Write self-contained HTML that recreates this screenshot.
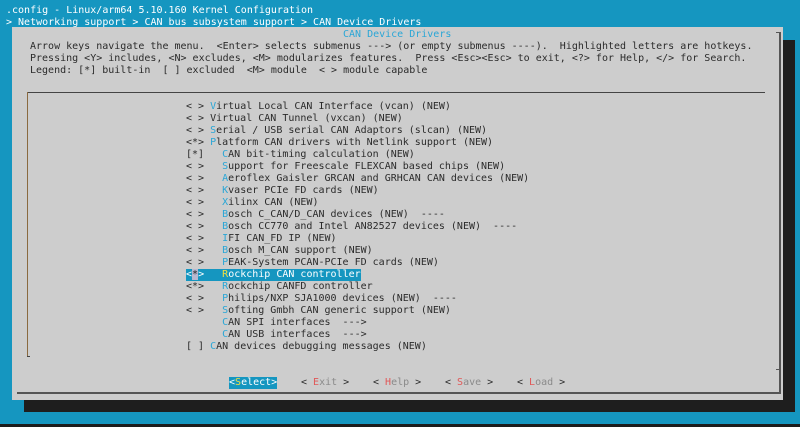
<!DOCTYPE html>
<html><head><meta charset="utf-8"><style>
html,body{margin:0;padding:0}
body{width:800px;height:427px;background:#1596c0;position:relative;overflow:hidden;font-family:"DejaVu Sans Mono","Liberation Mono",monospace;font-size:10px;color:#2b2b2b}
.r{position:absolute;white-space:pre;line-height:12px;height:12px;margin-top:2px}
.k{color:#2aa6d6}
.w{color:#fff}
.ln{position:absolute;background:#444}
.hl{background:#1596c0;color:#fff}
.y{color:#f0e040}
.g{color:#8a8a8a}
.red{color:#e05858}
</style></head><body>
<div style="position:absolute;left:0;top:424px;width:800px;height:3px;background:#1c1c1c"></div>
<div class="r w" style="left:6px;top:3px">.config - Linux/arm64 5.10.160 Kernel Configuration</div>
<div class="r w" style="left:6px;top:15px">&gt; Networking support &gt; CAN bus subsystem support &gt; CAN Device Drivers</div>
<div style="position:absolute;left:24px;top:40px;width:771px;height:372px;background:#1e1e1e"></div>
<div style="position:absolute;left:12px;top:27px;width:771px;height:373px;background:#cdcdcd"></div>
<div class="ln" style="left:779px;top:32px;width:2px;height:362px;background:#555"></div>
<div class="ln" style="left:776px;top:32px;width:4px;height:1px;background:#555"></div>
<div class="ln" style="left:17px;top:392px;width:764px;height:2px;background:#555"></div>
<div class="ln" style="left:27px;top:92px;width:738px;height:1px;background:#444"></div>
<div class="ln" style="left:27px;top:92px;width:1px;height:265px;background:#8a6a40"></div>
<div class="ln" style="left:27px;top:356px;width:3px;height:1px;background:#444"></div>
<div class="ln" style="left:776px;top:369px;width:3px;height:1px;background:#555"></div>

<div class="r k" style="left:343px;top:27px">CAN Device Drivers</div>
<div class="r" style="left:30px;top:39px">Arrow keys navigate the menu.  &lt;Enter&gt; selects submenus ---&gt; (or empty submenus ----).  Highlighted letters are hotkeys.</div>
<div class="r" style="left:30px;top:51px">Pressing &lt;Y&gt; includes, &lt;N&gt; excludes, &lt;M&gt; modularizes features.  Press &lt;Esc&gt;&lt;Esc&gt; to exit, &lt;?&gt; for Help, &lt;/&gt; for Search.</div>
<div class="r" style="left:30px;top:63px">Legend: [*] built-in  [ ] excluded  &lt;M&gt; module  &lt; &gt; module capable</div>

<div class="r" style="left:186px;top:99px">&lt; &gt; <span class="k">V</span>irtual Local CAN Interface (vcan) (NEW)</div>
<div class="r" style="left:186px;top:111px">&lt; &gt; Virtual CAN Tunnel (vxcan) (NEW)</div>
<div class="r" style="left:186px;top:123px">&lt; &gt; <span class="k">S</span>erial / USB serial CAN Adaptors (slcan) (NEW)</div>
<div class="r" style="left:186px;top:135px">&lt;*&gt; <span class="k">P</span>latform CAN drivers with Netlink support (NEW)</div>
<div class="r" style="left:186px;top:147px">[*]   <span class="k">C</span>AN bit-timing calculation (NEW)</div>
<div class="r" style="left:186px;top:159px">&lt; &gt;   <span class="k">S</span>upport for Freescale FLEXCAN based chips (NEW)</div>
<div class="r" style="left:186px;top:171px">&lt; &gt;   <span class="k">A</span>eroflex Gaisler GRCAN and GRHCAN CAN devices (NEW)</div>
<div class="r" style="left:186px;top:183px">&lt; &gt;   <span class="k">K</span>vaser PCIe FD cards (NEW)</div>
<div class="r" style="left:186px;top:195px">&lt; &gt;   <span class="k">X</span>ilinx CAN (NEW)</div>
<div class="r" style="left:186px;top:207px">&lt; &gt;   <span class="k">B</span>osch C_CAN/D_CAN devices (NEW)  ----</div>
<div class="r" style="left:186px;top:219px">&lt; &gt;   <span class="k">B</span>osch CC770 and Intel AN82527 devices (NEW)  ----</div>
<div class="r" style="left:186px;top:231px">&lt; &gt;   <span class="k">I</span>FI CAN_FD IP (NEW)</div>
<div class="r" style="left:186px;top:243px">&lt; &gt;   <span class="k">B</span>osch M_CAN support (NEW)</div>
<div class="r" style="left:186px;top:255px">&lt; &gt;   <span class="k">P</span>EAK-System PCAN-PCIe FD cards (NEW)</div>
<div class="r hl" style="left:186px;top:267px">&lt;<span style="background:#b8b8d0;color:#222">*</span>&gt;   <span class="y">R</span>ockchip CAN controller</div>
<div class="r" style="left:186px;top:279px">&lt;*&gt;   <span class="k">R</span>ockchip CANFD controller</div>
<div class="r" style="left:186px;top:291px">&lt; &gt;   <span class="k">P</span>hilips/NXP SJA1000 devices (NEW)  ----</div>
<div class="r" style="left:186px;top:303px">&lt; &gt;   <span class="k">S</span>ofting Gmbh CAN generic support (NEW)</div>
<div class="r" style="left:186px;top:315px">      <span class="k">C</span>AN SPI interfaces  ---&gt;</div>
<div class="r" style="left:186px;top:327px">      <span class="k">C</span>AN USB interfaces  ---&gt;</div>
<div class="r" style="left:186px;top:339px">[ ] <span class="k">C</span>AN devices debugging messages (NEW)</div>

<div class="r hl" style="left:229px;top:375px">&lt;<span class="y">S</span>elect&gt;</div>
<div class="r" style="left:301px;top:375px">&lt; <span class="red">E</span><span class="g">xit</span> &gt;</div>
<div class="r" style="left:373px;top:375px">&lt; <span class="red">H</span><span class="g">elp</span> &gt;</div>
<div class="r" style="left:445px;top:375px">&lt; <span class="red">S</span><span class="g">ave</span> &gt;</div>
<div class="r" style="left:517px;top:375px">&lt; <span class="red">L</span><span class="g">oad</span> &gt;</div>
</body></html>
